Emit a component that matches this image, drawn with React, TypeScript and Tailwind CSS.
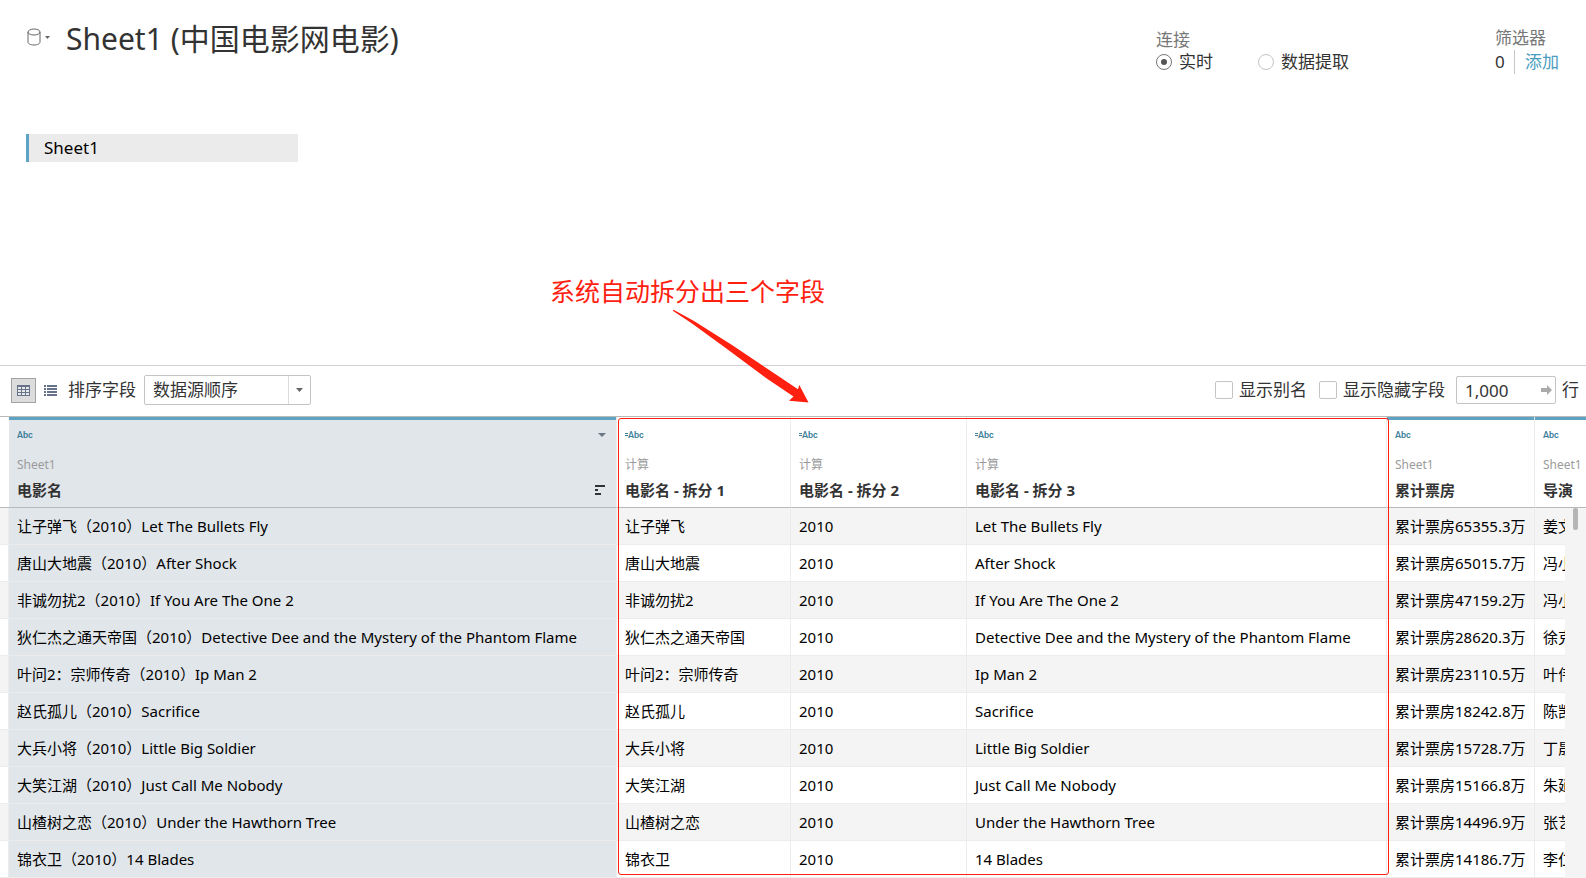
import { useState } from "react";

const COLUMNS = [
  { name: "电影名", source: "Sheet1", width: "w-[608px]", selected: true },
  { name: "电影名 - 拆分 1", source: "计算", width: "w-[174px]", calculated: true },
  { name: "电影名 - 拆分 2", source: "计算", width: "w-[176px]", calculated: true },
  { name: "电影名 - 拆分 3", source: "计算", width: "w-[420px]", calculated: true },
  { name: "累计票房", source: "Sheet1", width: "w-[148px]" },
  { name: "导演", source: "Sheet1", width: "" },
];

const MOVIES = [
  { title: "让子弹飞", english: "Let The Bullets Fly", gross: "65355.3", director: "姜文" },
  { title: "唐山大地震", english: "After Shock", gross: "65015.7", director: "冯小刚" },
  { title: "非诚勿扰2", english: "If You Are The One 2", gross: "47159.2", director: "冯小刚" },
  { title: "狄仁杰之通天帝国", english: "Detective Dee and the Mystery of the Phantom Flame", gross: "28620.3", director: "徐克" },
  { title: "叶问2：宗师传奇", english: "Ip Man 2", gross: "23110.5", director: "叶伟信" },
  { title: "赵氏孤儿", english: "Sacrifice", gross: "18242.8", director: "陈凯歌" },
  { title: "大兵小将", english: "Little Big Soldier", gross: "15728.7", director: "丁晟" },
  { title: "大笑江湖", english: "Just Call Me Nobody", gross: "15166.8", director: "朱延平" },
  { title: "山楂树之恋", english: "Under the Hawthorn Tree", gross: "14496.9", director: "张艺谋" },
  { title: "锦衣卫", english: "14 Blades", gross: "14186.7", director: "李仁港" },
];

const radioClass =
  "size-4 appearance-none rounded-full border border-[#c4c4c4] bg-clip-content p-1 checked:border-[#777] checked:bg-[#555]";
const checkboxClass =
  "size-[18px] appearance-none rounded-[2px] border border-[#c4c4c4] bg-white checked:bg-[#5fa3c3]";

function DatabaseIcon() {
  return (
    <svg width="14" height="18" viewBox="0 0 14 18" fill="none" stroke="#666">
      <ellipse cx="7" cy="4" rx="6" ry="3" />
      <path d="M1 4v10c0 1.700 2.200 3 6 3s6-1.300 6-3V4" />
    </svg>
  );
}

function GridIcon() {
  return (
    <svg width="13" height="11" viewBox="0 0 13 11" shapeRendering="crispEdges">
      <path fill="#66738a" d="M0 0h13v11H0z" />
      <path
        fill="#e8e8e8"
        d="M1 2h3v2H1zM5 2h3v2H5zM9 2h3v2H9zM1 5h3v2H1zM5 5h3v2H5zM9 5h3v2H9zM1 8h3v2H1zM5 8h3v2H5zM9 8h3v2H9z"
      />
    </svg>
  );
}

function ListIcon() {
  return (
    <svg width="13" height="11" viewBox="0 0 13 11" shapeRendering="crispEdges">
      <path
        fill="#66738a"
        d="M0 0h2v2H0zM3 0h10v2H3zM0 3h2v2H0zM3 3h10v2H3zM0 6h2v2H0zM3 6h10v2H3zM0 9h2v2H0zM3 9h10v2H3z"
      />
    </svg>
  );
}

function SortIcon() {
  return (
    <svg width="10" height="10" viewBox="0 0 10 10" shapeRendering="crispEdges">
      <path fill="#333" d="M0 0h10v2H0zM0 4h3v2H0zM0 8h6v2H0z" />
    </svg>
  );
}

function ColumnHeader({ column }: { column: any }) {
  return (
    <th
      scope="col"
      className={`border-r border-b border-r-[#ececec] border-b-[#b9b9b9] p-0 text-left font-normal last:border-r-0 ${
        column.selected ? "bg-[#e1e6ea]" : "bg-white"
      }`}
    >
      <div className={`h-[3px] ${column.calculated ? "" : "bg-[#5fa3c3]"}`} />
      <div className="px-2 pt-[7px] pb-[6px] whitespace-nowrap">
        <div className="flex h-4 items-center justify-between">
          <span className="flex items-center font-['Roboto',sans-serif] text-[9px] font-semibold leading-4 text-[#3c7f9b]">
            {column.calculated && (
              <svg width="3" height="4" viewBox="0 0 3 4" shapeRendering="crispEdges">
                <path fill="#3c7f9b" d="M0 0h3v1H0zM0 2h3v1H0z" />
              </svg>
            )}
            Abc
          </span>
          {column.selected && (
            <button type="button" aria-label="字段菜单" className="pr-[2px]">
              <svg width="8" height="4" viewBox="0 0 8 4">
                <path fill="#6b7785" d="M0 0h8L4 4z" />
              </svg>
            </button>
          )}
        </div>
        <div className="mt-3 text-[12px] leading-5 text-[#9b9b9b]">{column.source}</div>
        <div className="mt-1 flex items-center justify-between text-[15px] leading-[22px] font-bold text-[#333]">
          {column.name}
          {column.selected && (
            <button type="button" aria-label="排序" className="pr-[3px]">
              <SortIcon />
            </button>
          )}
        </div>
      </div>
    </th>
  );
}

export default function App() {
  const [mode, setMode] = useState("live");
  const [order, setOrder] = useState("source");
  const [rows, setRows] = useState("1,000");

  return (
    <div className="relative min-h-screen overflow-hidden bg-white font-['Noto_Sans','Noto_Sans_CJK_SC',sans-serif] text-[17px] leading-6 text-[#333]">
      <section className="h-[365px]">
        <header className="flex items-start justify-between px-[27px] pt-[19px]">
          <div className="flex items-start">
            <button type="button" aria-label="数据源" className="flex items-center gap-1 pt-[9px]">
              <DatabaseIcon />
              <svg width="5" height="3" viewBox="0 0 5 3">
                <path fill="#666" d="M0 0h5L2.500 3z" />
              </svg>
            </button>
            <h1 className="pl-4 text-[30px] leading-10">Sheet1 (中国电影网电影)</h1>
          </div>

          <div className="flex gap-[146px]">
            <fieldset className="pt-[10px] leading-[22px]">
              <legend className="contents text-[#777]">连接</legend>
              <div className="flex gap-[45px]">
                <label className="flex items-center gap-[7px]">
                  <input type="radio" name="mode" className={radioClass} checked={mode === "live"} onChange={() => setMode("live")} />
                  实时
                </label>
                <label className="flex items-center gap-[7px]">
                  <input type="radio" name="mode" className={radioClass} checked={mode === "extract"} onChange={() => setMode("extract")} />
                  数据提取
                </label>
              </div>
            </fieldset>
            <div className="pt-[7px]">
              <div className="text-[#777]">筛选器</div>
              <div className="flex items-center">
                <span className="w-[19px]">0</span>
                <a href="#filters" className="border-l border-[#c8c8c8] pl-[10px] text-[#4a9dc0]">
                  添加
                </a>
              </div>
            </div>
          </div>
        </header>

        <div className="mt-[60px] ml-[26px] h-7 w-[272px] border-l-3 border-[#5fa3c3] bg-[#ebebeb] pl-[15px] leading-7 text-black">
          Sheet1
        </div>
      </section>

      <section className="flex h-[52px] items-center justify-between border-t border-b border-t-[#d2d2d2] border-b-[#b9b9b9] pr-[7px] pb-[2px] pl-[11px]">
        <div className="flex items-center">
          <button type="button" aria-label="网格视图" className="flex size-[25px] items-center justify-center border border-[#a3a3a3] bg-[#dcdcdc]">
            <GridIcon />
          </button>
          <button type="button" aria-label="列表视图" className="px-2">
            <ListIcon />
          </button>
          <label htmlFor="order" className="pl-[3px]">
            排序字段
          </label>
          <div className="relative ml-2">
            <select
              id="order"
              value={order}
              onChange={(event) => setOrder(event.target.value)}
              className="block h-[30px] w-[167px] appearance-none rounded-[2px] border border-[#c4c4c4] bg-white pl-2 leading-7"
            >
              <option value="source">数据源顺序</option>
              <option value="name">字段名称</option>
            </select>
            <span className="pointer-events-none absolute inset-y-px right-px flex w-[22px] items-center justify-center border-l border-[#dcdcdc]">
              <svg width="7" height="4" viewBox="0 0 7 4">
                <path fill="#666" d="M0 0h7L3.500 4z" />
              </svg>
            </span>
          </div>
        </div>

        <div className="flex items-center">
          <label className="flex items-center gap-[6px]">
            <input type="checkbox" className={checkboxClass} />
            显示别名
          </label>
          <label className="ml-3 flex items-center gap-[6px]">
            <input type="checkbox" className={checkboxClass} />
            显示隐藏字段
          </label>
          <div className="relative ml-[11px]">
            <input
              id="rows"
              type="text"
              value={rows}
              onChange={(event) => setRows(event.target.value)}
              className="block h-7 w-[100px] rounded-[2px] border border-[#c4c4c4] pl-2"
            />
            <svg className="absolute top-[9px] right-1" width="11" height="10" viewBox="0 0 11 10">
              <path fill="#aaa" d="M0 3h6V0l5 5-5 5V7H0z" />
            </svg>
          </div>
          <label htmlFor="rows" className="pl-[6px]">
            行
          </label>
        </div>
      </section>

      <section className="relative">
        <table className="w-full table-fixed border-separate border-spacing-0 text-[15px] leading-5 text-black">
          <colgroup>
            <col className="w-[9px]" />
            {COLUMNS.map((column) => (
              <col key={column.name} className={column.width} />
            ))}
          </colgroup>
          <thead>
            <tr>
              <td className="border-b border-[#b9b9b9] p-0" />
              {COLUMNS.map((column) => (
                <ColumnHeader key={column.name} column={column} />
              ))}
            </tr>
          </thead>
          <tbody className="[&_td]:h-[37px] [&_td]:overflow-hidden [&_td]:border-r [&_td]:border-b [&_td]:border-[#ececec] [&_td]:px-2 [&_td]:py-0 [&_td]:whitespace-nowrap">
            {MOVIES.map((movie) => (
              <tr key={movie.title} className="odd:bg-[#f4f4f4]">
                <td />
                <td className="bg-[#e1e6ea]">
                  {movie.title}（2010）{movie.english}
                </td>
                <td>{movie.title}</td>
                <td>2010</td>
                <td>{movie.english}</td>
                <td>累计票房{movie.gross}万</td>
                <td>{movie.director}</td>
              </tr>
            ))}
          </tbody>
        </table>

        {/* scrollbar */}
        <div className="absolute top-[91px] right-0 bottom-0 w-[21px] bg-[#f4f4f4] pl-2">
          <div className="h-[22px] w-[5px] rounded-[2px] bg-[#b5b5b5]" />
        </div>

        {/* outline round the three split fields */}
        <div className="pointer-events-none absolute top-px bottom-[3px] left-[618px] w-[771px] rounded-[3px] border border-[#ff2010]" />
      </section>

      <p className="absolute top-[273px] left-[550px] text-[25px] leading-9 whitespace-nowrap text-[#ff2010]">
        系统自动拆分出三个字段
      </p>
      <svg className="pointer-events-none absolute top-[309px] left-[672px]" width="138" height="95" viewBox="0 0 138 95">
        <path
          fill="#ff2010"
          d="M1.500 .8 22 12 60 36 98 61.500 126 80.300 127.300 76 136.500 93.500 117 91.800 121.500 87.500 94 69 55 40 20 14.500 .8 1.800z"
        />
      </svg>
    </div>
  );
}
